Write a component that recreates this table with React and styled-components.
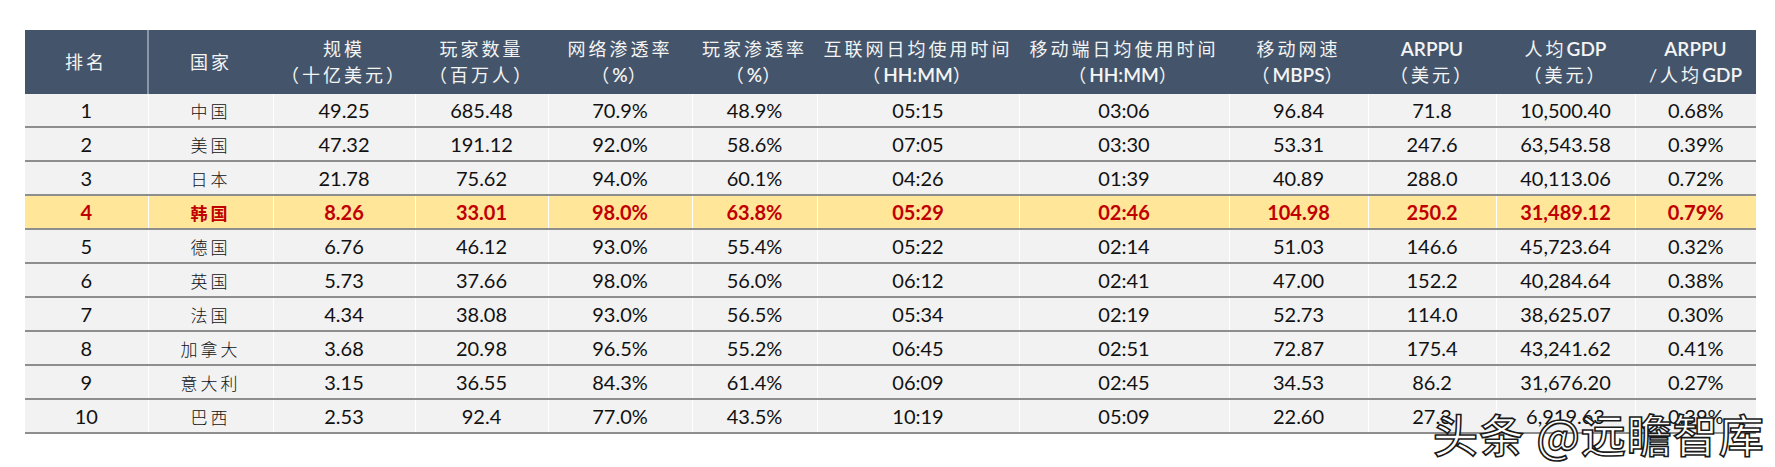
import React from 'react';
import styled, { createGlobalStyle } from 'styled-components';

const GlobalStyle = createGlobalStyle`
  body {
    margin: 0;
    background: #ffffff;
    font-family: Lato, "Noto Sans CJK SC", sans-serif;
  }
`;

const Page = styled.div`
  position: relative;
  width: 1775px;
  height: 467px;
  padding: 30px 0 0 25px;
  box-sizing: border-box;
  overflow: hidden;
`;

const Table = styled.table`
  border-collapse: collapse;
  table-layout: fixed;
  width: 1731px;
`;

const Col = styled.col`
  width: ${(p) => p.$w}px;
`;

const HeadCell = styled.th`
  height: 64px;
  padding: 0;
  background: #44546a;
  color: #f4f4f4;
  font-family: Lato, "Noto Sans CJK SC", sans-serif;
  font-weight: 400;
  font-size: 18px;
  line-height: 26px;
  letter-spacing: 3px;
  text-align: center;
  vertical-align: middle;
  border-left: ${(p) => (p.$sep ? '2px solid #8a96a6' : 'none')};
`;

const Latin = styled.span`
  font-family: Lato, sans-serif;
  font-size: 19px;
  font-weight: 600;
  letter-spacing: 0;
`;

const Row = styled.tr`
  background: ${(p) => (p.$hl ? '#ffe699' : '#f2f2f2')};
  color: ${(p) => (p.$hl ? '#c00000' : '#111111')};
  font-weight: ${(p) => (p.$hl ? 700 : 400)};
  border-bottom: 2px solid #8e8e8e;
`;

const Cell = styled.td`
  height: 32px;
  padding: 0;
  text-align: center;
  vertical-align: middle;
  font-family: Lato, sans-serif;
  font-size: 20px;
  border-left: 1px solid #ffffff;
  &:first-child {
    border-left: none;
  }
`;

const NameCell = styled(Cell)`
  font-family: "Noto Sans CJK SC", sans-serif;
  font-size: 17px;
  letter-spacing: 3px;
  font-weight: ${(p) => (p.$hl ? 700 : 300)};
`;

const Watermark = styled.div`
  position: absolute;
  left: 1433px;
  top: 401px;
  font-family: "Noto Sans CJK SC", sans-serif;
  font-size: 45px;
  font-weight: 500;
  color: #ffffff;
  -webkit-text-stroke: 1.6px #1a1a1a;
  letter-spacing: 1px;
  white-space: nowrap;
`;

const widths = [123, 125, 142, 133, 144, 125, 202, 210, 139, 128, 139, 121];

const rows = [
  ['1', '中国', '49.25', '685.48', '70.9%', '48.9%', '05:15', '03:06', '96.84', '71.8', '10,500.40', '0.68%'],
  ['2', '美国', '47.32', '191.12', '92.0%', '58.6%', '07:05', '03:30', '53.31', '247.6', '63,543.58', '0.39%'],
  ['3', '日本', '21.78', '75.62', '94.0%', '60.1%', '04:26', '01:39', '40.89', '288.0', '40,113.06', '0.72%'],
  ['4', '韩国', '8.26', '33.01', '98.0%', '63.8%', '05:29', '02:46', '104.98', '250.2', '31,489.12', '0.79%'],
  ['5', '德国', '6.76', '46.12', '93.0%', '55.4%', '05:22', '02:14', '51.03', '146.6', '45,723.64', '0.32%'],
  ['6', '英国', '5.73', '37.66', '98.0%', '56.0%', '06:12', '02:41', '47.00', '152.2', '40,284.64', '0.38%'],
  ['7', '法国', '4.34', '38.08', '93.0%', '56.5%', '05:34', '02:19', '52.73', '114.0', '38,625.07', '0.30%'],
  ['8', '加拿大', '3.68', '20.98', '96.5%', '55.2%', '06:45', '02:51', '72.87', '175.4', '43,241.62', '0.41%'],
  ['9', '意大利', '3.15', '36.55', '84.3%', '61.4%', '06:09', '02:45', '34.53', '86.2', '31,676.20', '0.27%'],
  ['10', '巴西', '2.53', '92.4', '77.0%', '43.5%', '10:19', '05:09', '22.60', '27.3', '6,919.63', '0.39%'],
];

export default function App() {
  return (
    <>
      <GlobalStyle />
      <Page>
        <Table>
          <colgroup>
            {widths.map((w, i) => (
              <Col key={i} $w={w} />
            ))}
          </colgroup>
          <thead>
            <tr>
              <HeadCell>排名</HeadCell>
              <HeadCell $sep>国家</HeadCell>
              <HeadCell>规模<br />（十亿美元）</HeadCell>
              <HeadCell>玩家数量<br />（百万人）</HeadCell>
              <HeadCell>网络渗透率<br />（<Latin>%</Latin>）</HeadCell>
              <HeadCell>玩家渗透率<br />（<Latin>%</Latin>）</HeadCell>
              <HeadCell>互联网日均使用时间<br />（<Latin>HH:MM</Latin>）</HeadCell>
              <HeadCell>移动端日均使用时间<br />（<Latin>HH:MM</Latin>）</HeadCell>
              <HeadCell>移动网速<br />（<Latin>MBPS</Latin>）</HeadCell>
              <HeadCell><Latin>ARPPU</Latin><br />（美元）</HeadCell>
              <HeadCell>人均<Latin>GDP</Latin><br />（美元）</HeadCell>
              <HeadCell><Latin>ARPPU</Latin><br />/人均<Latin>GDP</Latin></HeadCell>
            </tr>
          </thead>
          <tbody>
            {rows.map((r) => {
              const hl = r[0] === '4';
              return (
                <Row key={r[0]} $hl={hl}>
                  <Cell>{r[0]}</Cell>
                  <NameCell $hl={hl}>{r[1]}</NameCell>
                  {r.slice(2).map((v, i) => (
                    <Cell key={i}>{v}</Cell>
                  ))}
                </Row>
              );
            })}
          </tbody>
        </Table>
        <Watermark>头条 @远瞻智库</Watermark>
      </Page>
    </>
  );
}
